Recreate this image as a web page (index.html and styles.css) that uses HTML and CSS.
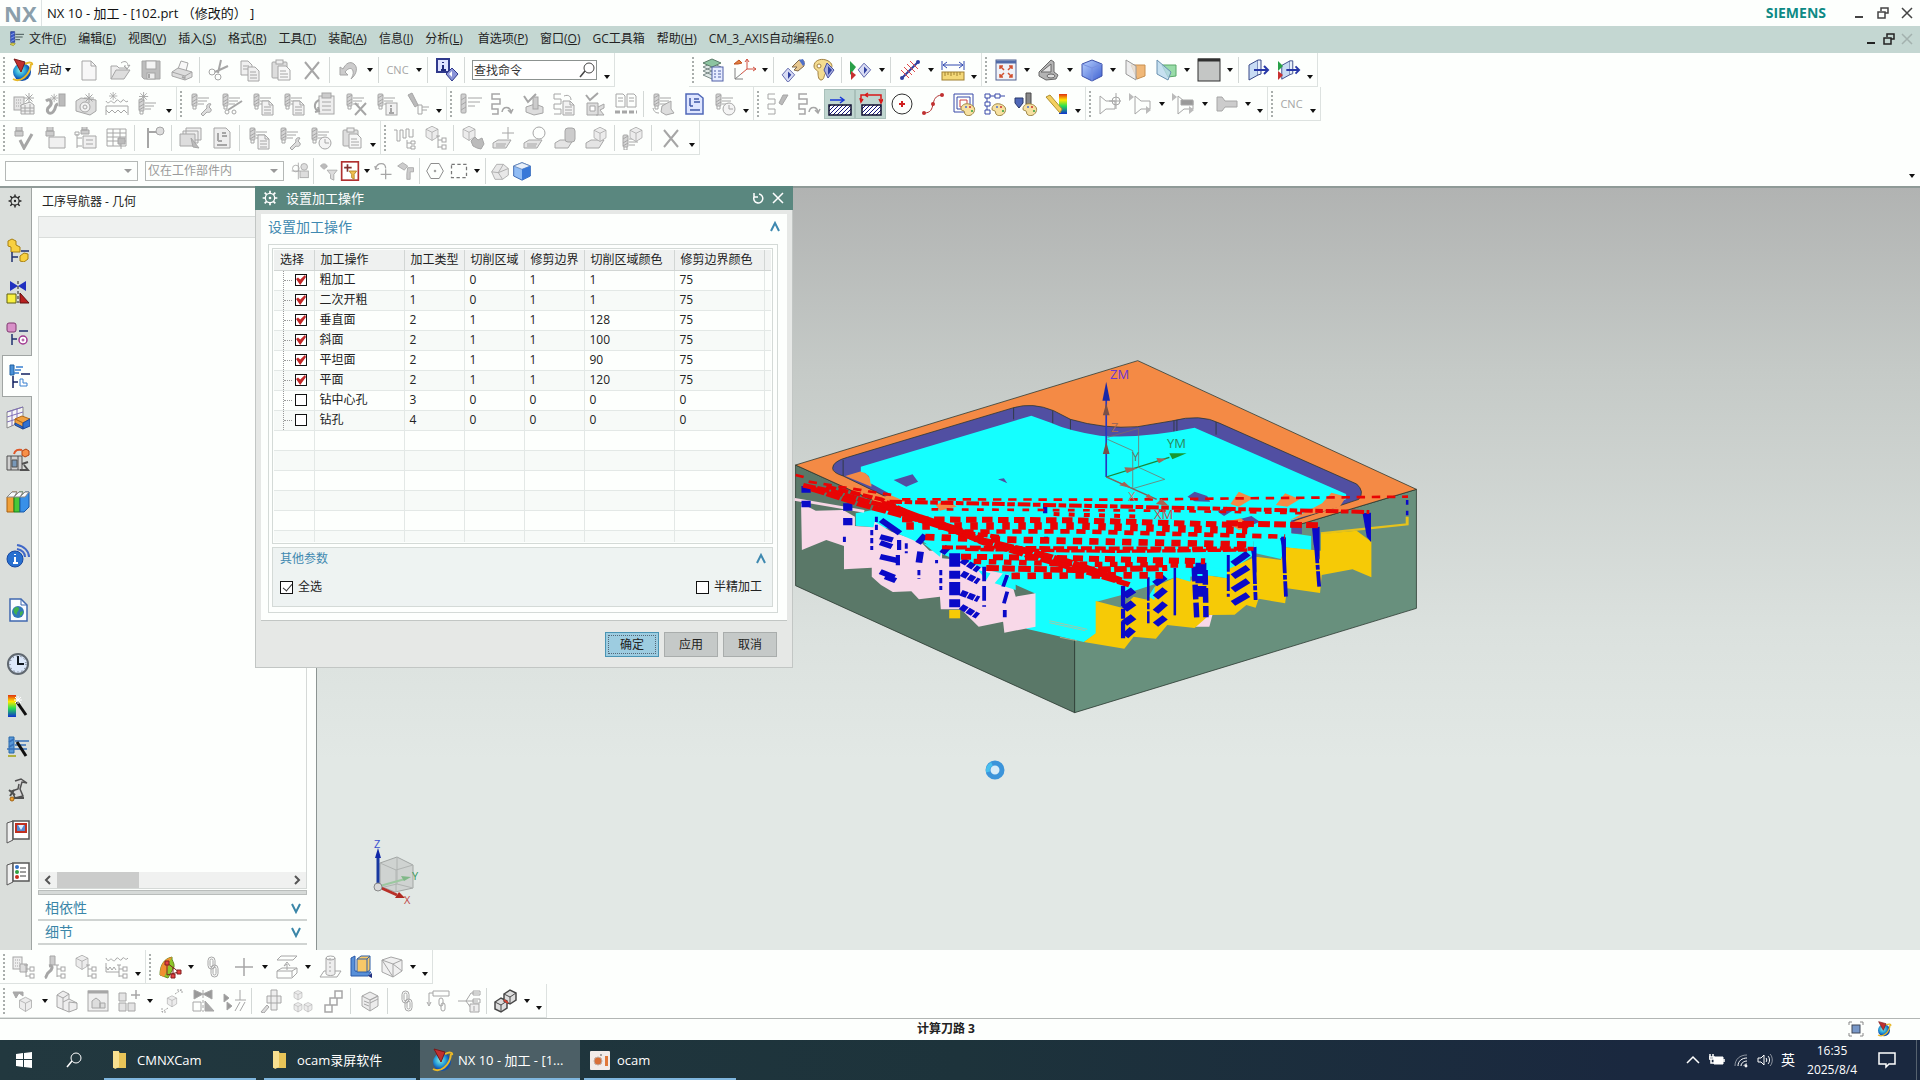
FILE: index.html
```
<!DOCTYPE html>
<html lang="zh-CN">
<head>
    <meta charset="UTF-8">
    <meta name="viewport" content="width=device-width, initial-scale=1.0">
    <title>NX 10 - 加工 - [102.prt （修改的） ]</title>
    <link rel="stylesheet" href="styles.css">
</head>
<body>
    <!-- icon sprite -->
    <svg class="sprite" aria-hidden="true">
        <defs>
            <linearGradient id="gBlue" x1="0" y1="0" x2="1" y2="1"><stop offset="0" stop-color="#b9d2ff"/><stop offset="1" stop-color="#3c5fd0"/></linearGradient>
            <linearGradient id="gRain" x1="0" y1="0" x2="0" y2="1"><stop offset="0" stop-color="#e03010"/><stop offset=".3" stop-color="#ffe800"/><stop offset=".6" stop-color="#28e050"/><stop offset="1" stop-color="#1030d0"/></linearGradient>
            <radialGradient id="gGlobe" cx=".4" cy=".4"><stop offset="0" stop-color="#8ff0e0"/><stop offset=".6" stop-color="#28a0d8"/><stop offset="1" stop-color="#1050b0"/></radialGradient>
            <pattern id="hatch" width="4" height="4" patternUnits="userSpaceOnUse"><path d="M-1 5L5-1" stroke="#15157a" stroke-width="1"/></pattern>
        </defs>

        <!-- small parts shared by the toolbar icons -->
        <symbol id="mill" viewBox="0 0 24 24"><rect x="3" y="2" width="5" height="12" rx="1" fill="#d4d4d4"/><path d="M3 6l5-3M3 10l5-3M3 13l5-3M4 14v3h3v-3M9 6h11M9 9h9M9 12h6"/></symbol>
        <symbol id="star" viewBox="0 0 24 24"><path d="M17 1v10M12 6h10M13.500 2.500l7 7M20.500 2.500l-7 7"/></symbol>
        <symbol id="tree" viewBox="0 0 24 24"><path d="M14 10v12M14 14h4M14 21h4M12 10h4"/><rect x="18" y="12" width="4" height="4" fill="#fff"/><rect x="18" y="19" width="4" height="4" fill="#fff"/></symbol>
        <symbol id="page" viewBox="0 0 24 24"><path d="M11 9h7l4 4v10H11z" fill="#f2f2f2"/><path d="M18 9v4h4M13 15h7M13 18h7M13 21h7"/></symbol>
        <symbol id="palette" viewBox="0 0 24 24"><path d="M9 17c0-4 4-6 8-5s7 4 5 8-6 4-8 3-1-3-2-4-3 0-3-2z" fill="#f6e0a0" stroke="#a08848"/><circle cx="14" cy="15" r="1" fill="#4a70d0" stroke="none"/><circle cx="18" cy="15" r="1" fill="#d03030" stroke="none"/><circle cx="20" cy="19" r="1" fill="#30a040" stroke="none"/></symbol>
        <symbol id="cube" viewBox="0 0 24 24"><path d="M4 7l8-4 8 4v10l-8 5-8-5z" fill="#ececec"/><path d="M4 7l8 4 8-4M12 11v11"/></symbol>
        <symbol id="diamond" viewBox="0 0 24 24"><path d="M12 5l8 8-8 9-7-9z" fill="#d8dcf4" stroke="#4850a0"/><path d="M12 9l4 4-4 5z" fill="#3040a0" stroke="none"/></symbol>

        <!-- standard bar -->
        <symbol id="globe" viewBox="0 0 24 24"><circle cx="12" cy="14" r="9" fill="url(#gGlobe)" stroke="none"/><path d="M3 21c7 4 17-3 18-15M22 7c1-3-3-3-7-1" stroke="#e8b828" stroke-width="2"/><path d="M4 1l11 3-4 10z" fill="#c03030" stroke="#7a1818"/></symbol>
        <symbol id="new" viewBox="0 0 24 24"><path d="M5 3h9l5 5v14H5z" fill="#f7f7f7"/><path d="M14 3v5h5"/></symbol>
        <symbol id="open" viewBox="0 0 24 24"><path d="M3 21V8h6l2 2h8v3" fill="#eee"/><path d="M3 21l5-9h14l-6 9z" fill="#ddd"/><path d="M13 5c4-3 7-1 7 3l2-1-3 4-3-3 2 0"/></symbol>
        <symbol id="save" viewBox="0 0 24 24"><path d="M3 3h18v18H5l-2-2z" fill="#bdbdbd"/><rect x="7" y="3" width="10" height="8" fill="#f4f4f4"/><rect x="8" y="15" width="8" height="6" fill="#eee"/><path d="M10 16v4" stroke-width="2"/></symbol>
        <symbol id="print" viewBox="0 0 24 24"><path d="M8 11l3-8 7 2-2 8" fill="#f8f8f8"/><path d="M2 14l6-4 14 4v5l-7 3-13-4z" fill="#ddd"/><path d="M2 14l13 4 7-4M15 18v4"/><path d="M12 19l3 1" stroke-width="2"/></symbol>
        <symbol id="cut" viewBox="0 0 24 24"><path d="M14 2l-3 13M21 8L8 14" stroke-width="2"/><circle cx="5" cy="14" r="3"/><circle cx="11" cy="19" r="3"/></symbol>
        <symbol id="copy" viewBox="0 0 24 24"><path d="M3 3h7l4 4v10H3z" fill="#f0f0f0"/><path d="M10 9h7l4 4v10H10z" fill="#f0f0f0"/><path d="M5 8h6M5 11h5M12 14h6M12 17h7M12 20h7"/></symbol>
        <symbol id="paste" viewBox="0 0 24 24"><rect x="3" y="4" width="15" height="16" rx="1" fill="#ddd"/><rect x="7" y="2" width="7" height="4" fill="#eee"/><path d="M9 8h8l4 4v10H9z" fill="#f7f7f7"/><path d="M11 13h6M11 16h8M11 19h8"/></symbol>
        <symbol id="del" viewBox="0 0 24 24"><path d="M5 4l14 17M19 4L5 21" stroke-width="2"/></symbol>
        <symbol id="undo" viewBox="0 0 24 24"><path d="M3 9v8h8l-3-3c3-4 7-5 8-1 1 3-1 6-2 8 6-5 7-12 3-15s-8-1-11 5z" fill="#ccc"/></symbol>
        <symbol id="info" viewBox="0 0 24 24"><rect x="2" y="1" width="12" height="13" fill="#dfe3ff" stroke="#303a8c" stroke-width="2"/><path d="M8 4v1M8 7v5M6 12h5" stroke="#202a7c" stroke-width="2"/><path d="M17 10l6 6-6 7-6-7z" fill="#8a94d8" stroke="#303a8c"/><path d="M17 13v6l-3-3z" fill="#fff" stroke="none"/></symbol>
        <symbol id="layers" viewBox="0 0 24 24"><path d="M2 17l9-4 9 4-9 4zM2 13l9-4 9 4-9 4zM2 9l9-4 9 4-9 4z" fill="#dfe8e6" stroke="#7a8a88"/><path d="M2 5l9-4 9 4-9 4z" fill="#8cc4a0" stroke="#5a7a68"/><rect x="11" y="9" width="11" height="14" fill="#e6ecff" stroke="#5060a8"/><path d="M13 13h2M17 13h3M13 16h2M17 16h3M13 19h2M17 19h3" stroke="#5060a8"/></symbol>
        <symbol id="wcs" viewBox="0 0 24 24"><path d="M15 1v10h9M15 11l-6 5M13 4l2-3 2 3M21 9l3 2-3 2" stroke="#d05040"/><path d="M3 10v11h8M3 21l6-5" stroke="#808080"/><path d="M2 6l5-4 3 3-4 1z" fill="#e08040" stroke="#c05020"/></symbol>
        <symbol id="hand" viewBox="0 0 24 24"><use href="#diamond" x="-3" y="6" width="20" height="20"/><path d="M11 9l7-7 5 1v5l-6 5-4-1 3-3z" fill="#e8c890" stroke="#806848"/><path d="M18 2l4-1 2 5-2 2z" fill="#5070c8" stroke="none"/></symbol>
        <symbol id="objpal" viewBox="0 0 24 24"><path d="M2 8c0-5 6-8 12-6s7 6 5 9-5 3-6 5-1 6-4 6-3-6-3-8-4-2-4-6z" fill="#f4dc90" stroke="#a08040"/><path d="M15 5l7 7-6 8-4-8z" fill="#a8b0e0" stroke="#4850a0"/><path d="M16 8l4 4-4 5z" fill="#3040a0" stroke="none"/><circle cx="7" cy="8" r="2" fill="#fff" stroke="#a08040"/></symbol>
        <symbol id="move" viewBox="0 0 24 24"><path d="M1 3v14l6-8z" fill="#28a048" stroke="none"/><path d="M2 13v9l5-5z" fill="#c83030" stroke="none"/><use href="#diamond" x="5" width="20" height="22"/></symbol>
        <symbol id="measline" viewBox="0 0 24 24"><path d="M4 20L20 4" stroke="#3040a0" stroke-width="2"/><path d="M3 12l8 8M6 9l8 8M9 6l8 8M12 3l8 8" stroke="#e04848"/><circle cx="4" cy="20" r="2" fill="#3040a0" stroke="none"/><circle cx="20" cy="4" r="2" fill="#3040a0" stroke="none"/></symbol>
        <symbol id="ruler" viewBox="0 0 24 24"><path d="M1 3v9M23 3v9M2 7h20M6 4L2 7l4 3M18 4l4 3-4 3" stroke="#3048b0"/><rect x="1" y="14" width="22" height="8" fill="#f4d878" stroke="#a08030"/><path d="M4 14v4M7 14v3M10 14v4M13 14v3M16 14v4M19 14v3" stroke="#a08030"/></symbol>
        <symbol id="fit" viewBox="0 0 24 24"><rect x="2" y="2" width="20" height="20" fill="#f0f2f8" stroke="#506090"/><path d="M2 4h20" stroke="#506aa8" stroke-width="3"/><path d="M10 12L6 8M6 11V8h3M14 12l4-4M18 11V8h-3M10 15l-4 4M6 16v3h3M14 15l4 4M18 16v3h-3" stroke="#d05030" stroke-width="1.500"/></symbol>
        <symbol id="orient" viewBox="0 0 24 24"><path d="M2 14L14 2l3 2v10l4 3-2 4-10 1-7-4z" fill="#b4b4b4" stroke="#686868"/><path d="M4 14l10-8v8z" fill="#e4e4e4" stroke="#686868"/><ellipse cx="14" cy="18" rx="4" ry="2" fill="#ddd" stroke="#686868"/></symbol>
        <symbol id="shaded" viewBox="0 0 24 24"><path d="M2 6l10-4 10 4v12l-10 5-10-5z" fill="url(#gBlue)" stroke="#3c50a8"/><path d="M2 6l10 4 10-4M12 10v13" stroke="#7890e0"/></symbol>
        <symbol id="clipo" viewBox="0 0 24 24"><path d="M8 7h14v11l-8 3z" fill="#f0b878" stroke="#c89050"/><path d="M3 2l10 6v14L3 16z" fill="#e8e8e8" stroke="#989898" fill-opacity=".8"/></symbol>
        <symbol id="clipg" viewBox="0 0 24 24"><path d="M8 7h14v11l-8 1z" fill="#98dca8" stroke="#58a868"/><path d="M3 2l14 12-3 8L3 16z" fill="#b8d8ec" stroke="#6890b0" fill-opacity=".8"/></symbol>
        <symbol id="bg" viewBox="0 0 24 24"><rect x="1" y="1" width="22" height="22" fill="#c4c6c5" stroke="#303030"/><path d="M1 2h22" stroke="#303030" stroke-width="3"/></symbol>
        <symbol id="exit" viewBox="0 0 24 24"><path d="M3 7l9-5v15l-9 5z" fill="#c8dcf4" stroke="#384888"/><path d="M12 2h3v14l-3 1" fill="#e8f0fa" stroke="#384888"/><path d="M8 12h13M18 8l4 4-4 4" stroke="#2838a8" stroke-width="2"/></symbol>
        <symbol id="exit2" viewBox="0 0 24 24"><use href="#exit" x="2" width="22" height="24"/><path d="M1 3v10l5-5z" fill="#28a048" stroke="none"/><path d="M1 13v9l5-5z" fill="#c83030" stroke="none"/></symbol>

        <!-- machining bars -->
        <symbol id="m1" viewBox="0 0 24 24"><rect x="2" y="5" width="10" height="13" fill="#e4e4e4"/><path d="M4 8h6M4 11h6M4 14h6" stroke-dasharray="1 1"/><path d="M9 13l9-3 4 3v9H9z" fill="#eee"/><path d="M9 16h13M9 19h13M13 13v9M18 12v10"/><use href="#star"/></symbol>
        <symbol id="m2" viewBox="0 0 24 24"><rect x="16" y="2" width="6" height="12" fill="#bbb"/><path d="M3 9c5-4 7 3 3 6s0 9 4 5 1-7 5-8" stroke-width="3"/><use href="#star" x="-3" y="1" width="20" height="20"/></symbol>
        <symbol id="m3" viewBox="0 0 24 24"><path d="M2 9l5-3 15 2v11l-6 4-14-4z" fill="#ddd"/><circle cx="11" cy="15" r="5" fill="#f2f2f2"/><circle cx="11" cy="15" r="2"/><use href="#star" x="-2"/></symbol>
        <symbol id="m4" viewBox="0 0 24 24"><path d="M1 9c2 4 4 0 5 0s3 4 5 0 4 4 6 0 3 3 6 0M1 23V14h22v9M1 18l3 3 3-3 3 3 3-3 3 3 3-3 3 3"/><use href="#star" x="-6" y="-1" width="20" height="20"/></symbol>
        <symbol id="m5" viewBox="0 0 24 24"><use href="#mill" y="5"/><use href="#star" x="-8" y="-1" width="22" height="22"/></symbol>
        <symbol id="mw" viewBox="0 0 24 24"><use href="#mill"/><path d="M12 22l6-6c-1-3 1-5 4-4l-2 3 2 2c1 3-2 4-4 3l-4 4z" fill="#ddd"/></symbol>
        <symbol id="mc" viewBox="0 0 24 24"><use href="#mill"/><path d="M22 9L8 18" stroke-width="2"/><circle cx="7" cy="20" r="2"/><circle cx="14" cy="20" r="2"/></symbol>
        <symbol id="mp" viewBox="0 0 24 24"><use href="#mill"/><use href="#page"/></symbol>
        <symbol id="mx" viewBox="0 0 24 24"><use href="#mill"/><path d="M11 11l11 12M22 11L11 23" stroke-width="2"/></symbol>
        <symbol id="mi" viewBox="0 0 24 24"><use href="#mill"/><rect x="11" y="11" width="11" height="12" fill="#f2f2f2"/><path d="M16 13v2M16 16v5M14 21h5" stroke-width="2"/></symbol>
        <symbol id="mf" viewBox="0 0 24 24"><path d="M2 3l4-2 6 12-3 2z" fill="#bbb"/><path d="M12 13h4v9h-4zM16 15h7M16 18h5"/></symbol>
        <symbol id="clip" viewBox="0 0 24 24"><rect x="6" y="4" width="15" height="18" fill="#eee"/><rect x="9" y="1" width="9" height="5" fill="#ccc"/><path d="M9 10h9M9 14h9M9 18h9"/><path d="M6 8c-6 3-5 10 0 11l-1-4M6 19l-4 1" stroke-width="2"/></symbol>
        <symbol id="gen" viewBox="0 0 24 24"><rect x="2" y="2" width="5" height="19" rx="1" fill="#d0d0d0"/><path d="M2 8l5-3M2 13l5-3M2 18l5-3M9 6h14M9 10h12M9 14h7"/></symbol>
        <symbol id="path" viewBox="0 0 24 24"><path d="M10 2H2v5h8v5H2v5h6v5H2" stroke-width="1.500"/><path d="M12 20c1-6 8-6 9 0M18 18l3 3 2-4" stroke-width="1.500"/></symbol>
        <symbol id="verify" viewBox="0 0 24 24"><path d="M3 4l4 6 8-8" stroke-width="2"/><path d="M5 15l9-3 8 3v6l-9 2-8-3z" fill="#ddd"/><rect x="12" y="5" width="5" height="12" fill="#ccc"/></symbol>
        <symbol id="pathp" viewBox="0 0 24 24"><path d="M9 2H2v5h7v5H2v5h7v5H2"/><use href="#page"/><path d="M12 4c5-2 7 1 7 4"/></symbol>
        <symbol id="mach" viewBox="0 0 24 24"><path d="M3 3l4 5 8-7" stroke-width="2"/><path d="M4 11h11v12H4zM15 15l6-3v4l-4 2 4 5h-8" fill="#ddd"/><path d="M7 14h5v5H7z" fill="#fff"/></symbol>
        <symbol id="docs" viewBox="0 0 24 24"><path d="M2 2h7l2 2v11H2zM13 2h7l2 2v11h-9zM4 6h5M4 9h5M15 6h5M15 9h5"/><path d="M1 20h22" stroke-width="3" stroke-dasharray="5 2"/></symbol>
        <symbol id="mhand" viewBox="0 0 24 24"><use href="#mill"/><path d="M11 14l9-5v8l3 4-8 2-5-3z" fill="#ddd"/><path d="M2 16c1 4 3 5 6 5"/></symbol>
        <symbol id="shop" viewBox="0 0 24 24"><path d="M4 2h12l5 4v16H4z" fill="#dfe6ff" stroke="#5068b8" stroke-width="1.500"/><path d="M8 6v8M8 14h3M12 7h5M12 10h6M8 18h10" stroke="#4058a8" stroke-width="1.500"/></symbol>
        <symbol id="mclock" viewBox="0 0 24 24"><use href="#mill"/><circle cx="16" cy="17" r="6" fill="#f4f4f4"/><path d="M16 13v4h4"/></symbol>
        <symbol id="pathm" viewBox="0 0 24 24"><path d="M9 2H2v5h7v5H2v5h7v5H2"/><path d="M22 3l-6 10-3-2 4-8z" fill="#bbb"/></symbol>
        <symbol id="hat1" viewBox="0 0 24 24"><path d="M2 8h13M12 5l4 3-4 3" stroke="#1838d8" stroke-width="1.500"/><rect x="1" y="13" width="22" height="10" fill="#fff" stroke="none"/><rect x="1" y="13" width="22" height="10" fill="url(#hatch)" stroke="#101030" stroke-width="1.500"/></symbol>
        <symbol id="hat2" viewBox="0 0 24 24"><path d="M2 9V3h20v6M9 1L6 3l3 2M1 6l1 4 2-3M20 7l2 4 2-4" stroke="#d81818" stroke-width="1.500"/><rect x="3" y="13" width="19" height="10" fill="#fff" stroke="none"/><rect x="3" y="13" width="19" height="10" fill="url(#hatch)" stroke="#101030" stroke-width="1.500"/></symbol>
        <symbol id="circ" viewBox="0 0 24 24"><circle cx="12" cy="12" r="10" stroke="#303030"/><path d="M12 9v6M9 12h6" stroke="#d02020" stroke-width="2"/></symbol>
        <symbol id="curve" viewBox="0 0 24 24"><path d="M3 21c14 0 4-17 18-18" stroke="#b03030"/><circle cx="3" cy="21" r="2" fill="#c03030" stroke="none"/><circle cx="12" cy="12" r="2" fill="#c03030" stroke="none"/><circle cx="21" cy="3" r="2" fill="#c03030" stroke="none"/></symbol>
        <symbol id="bpal" viewBox="0 0 24 24"><path d="M2 2h19v18H2zM5 5h13v12H5z" stroke="#3848a8"/><path d="M8 15V8h7v7z" stroke="#d04040"/><use href="#palette"/></symbol>
        <symbol id="tpal" viewBox="0 0 24 24"><path d="M2 2h5v4H2zM2 10h5v4H2zM2 18h5v4H2zM12 2h5v4h-5zM7 4h5M4 6v4M4 14v4M17 4h5" stroke="#3848a8"/><use href="#palette"/></symbol>
        <symbol id="mpal" viewBox="0 0 24 24"><path d="M12 1h5v11h-5z" fill="#888" stroke="#484848"/><path d="M1 6h8v5l-4 5-4-5z" fill="#5068b8" stroke="#283868"/><use href="#palette"/></symbol>
        <symbol id="rain" viewBox="0 0 24 24"><rect x="14" y="2" width="8" height="20" fill="url(#gRain)" stroke="none"/><path d="M1 5l4-2 12 14-2 4z" fill="#f4d060" stroke="#b09030"/></symbol>
        <symbol id="funnel" viewBox="0 0 24 24"><path d="M2 4l6 5h9v8H8l-6 5z"/></symbol>
        <symbol id="fu1" viewBox="0 0 24 24"><use href="#funnel"/><circle cx="18" cy="9" r="4"/><path d="M18 1v16M11 9h12"/></symbol>
        <symbol id="fu2" viewBox="0 0 24 24"><use href="#funnel" x="4"/><path d="M0 1v8l5-4zM17 14v8l5-4z" fill="#bbb" stroke="none"/></symbol>
        <symbol id="fu3" viewBox="0 0 24 24"><use href="#funnel" x="4"/><path d="M9 8h12v5H9z" fill="#999"/><path d="M0 1v8l5-4zM17 14v8l5-4z" fill="#bbb" stroke="none"/></symbol>
        <symbol id="fu4" viewBox="0 0 24 24"><path d="M2 5h5l3 4h12v6H10l-3 4H2z" fill="#ccc"/></symbol>

        <symbol id="pok" viewBox="0 0 24 24"><path d="M4 1v4h6V1M3 5h8v5H3z" fill="#ccc"/><path d="M8 14l4 8 8-14" stroke-width="3"/></symbol>
        <symbol id="pbox" viewBox="0 0 24 24"><path d="M4 1v4h6V1M3 5h8v5H3z" fill="#ccc"/><path d="M6 11h16v11H6z" fill="#f0f0f0"/></symbol>
        <symbol id="ptree" viewBox="0 0 24 24"><path d="M8 1v3h5V1M7 4h8v4H7z" fill="#ccc"/><path d="M3 8v14M3 12h5M3 20h5M1 6h4v3H1z"/><path d="M9 10h13v12H9zM12 14h7M12 18h7" fill="#f0f0f0"/></symbol>
        <symbol id="ptab" viewBox="0 0 24 24"><path d="M2 3h19v17H2zM2 7h19M2 11h19M2 15h19M8 3v17M15 3v17"/><path d="M13 12h7v6h-7zM16 18v5" fill="#bbb"/></symbol>
        <symbol id="flag" viewBox="0 0 24 24"><path d="M6 2v20" stroke-width="2"/><path d="M7 6h9" stroke-width="2"/><circle cx="18" cy="5" r="4" fill="#ddd"/></symbol>
        <symbol id="wins" viewBox="0 0 24 24"><path d="M7 2h15v12H7zM4 5h15v12H4z" fill="#eee"/><path d="M1 8h15v12H1z" fill="#ddd"/><path d="M12 12l8 10-6-1z" fill="#bbb"/></symbol>
        <symbol id="mdoc" viewBox="0 0 24 24"><path d="M4 2h12l4 4v16H4z" fill="#eee"/><path d="M8 7v8M8 15h4M12 7h4M12 10h5M7 19h10" stroke-width="2"/></symbol>
        <symbol id="wave" viewBox="0 0 24 24"><path d="M1 4h3v11h3V4h3v8h3V3h3v8h4V3M14 14v8M14 17h4M14 22h4M18 15h4v3h-4zM18 20h4v3h-4z"/></symbol>
        <symbol id="ctree" viewBox="0 0 24 24"><use href="#cube" x="-1" y="-2" width="18" height="18"/><use href="#tree"/></symbol>
        <symbol id="cbin" viewBox="0 0 24 24"><use href="#cube" x="-1" y="-2" width="18" height="18"/><path d="M10 15l4-4 3 3 4-2 2 6-3 5-4-1-4-2z" fill="#bbb"/></symbol>
        <symbol id="plus1" viewBox="0 0 24 24"><path d="M16 1v12M10 7h12"/><path d="M1 17l5-3h13l-5 8H1z" fill="#e4e4e4"/><path d="M4 18h10M4 20h9"/></symbol>
        <symbol id="loop1" viewBox="0 0 24 24"><circle cx="16" cy="7" r="6"/><path d="M1 17l5-3h13l-5 8H1z" fill="#e4e4e4"/><path d="M4 18h10M4 20h9"/></symbol>
        <symbol id="cyl1" viewBox="0 0 24 24"><path d="M1 17l5-3h13l-5 8H1z" fill="#e4e4e4"/><rect x="11" y="2" width="10" height="14" rx="3" fill="#ccc"/></symbol>
        <symbol id="cub1" viewBox="0 0 24 24"><path d="M1 17l5-3h13l-5 8H1z" fill="#e4e4e4"/><use href="#cube" x="6" y="-1" width="18" height="18"/></symbol>
        <symbol id="cmill" viewBox="0 0 24 24"><use href="#mill" y="7" x="-2"/><use href="#cube" x="5" y="-1" width="18" height="18"/></symbol>

        <!-- selection bar -->
        <symbol id="selstar" viewBox="0 0 24 24"><path d="M10 2v20M2 12h10"/><circle cx="7" cy="9" r="4"/><circle cx="17" cy="7" r="4" fill="#ddd"/><rect x="12" y="12" width="10" height="8" fill="#ddd"/></symbol>
        <symbol id="lock" viewBox="0 0 24 24"><path d="M3 6c2-4 8-3 8 1l-4 3z" fill="#bbb"/><path d="M11 11h12l-4 5v7l-4-2v-5z" fill="#ddd"/></symbol>
        <symbol id="selflt" viewBox="0 0 24 24"><rect x="2" y="1" width="20" height="22" fill="#fff" stroke="#b03030" stroke-width="2"/><path d="M9 4v9M5 8h9" stroke="#803030" stroke-width="2"/><path d="M11 12h9l-3 4v6l-3-2v-4z" fill="#f0c050" stroke="#b08020"/></symbol>
        <symbol id="snap" viewBox="0 0 24 24"><path d="M2 9c2-8 12-8 12 0M1 6l1 4 4-1M14 10v12M8 16h13" stroke-width="1.500"/></symbol>
        <symbol id="snap2" viewBox="0 0 24 24"><path d="M2 6l6-4 6 4-4 5zM14 8h7v5h-4v9h-4v-7z" fill="#ccc"/></symbol>
        <symbol id="hex" viewBox="0 0 24 24"><path d="M7 3h10l5 9-5 9H7l-5-9z"/><circle cx="12" cy="12" r="1"/></symbol>
        <symbol id="dash" viewBox="0 0 24 24"><rect x="3" y="4" width="18" height="16" stroke-dasharray="4 3" stroke-width="1.500"/></symbol>
        <symbol id="prism" viewBox="0 0 24 24"><path d="M2 13l6-9h8l6 5v8l-7 5H6z" fill="#e8e8e8"/><path d="M2 13l8 1 6-10M10 14l5 8M10 14l12-5"/></symbol>
        <symbol id="face" viewBox="0 0 24 24"><path d="M2 6l10-4 10 4v12l-10 5-10-5z" fill="#90bcf4" stroke="#2858a8"/><path d="M2 6l10-4 10 4-10 4z" fill="#e8f0fa" stroke="#6888b8"/><path d="M12 10l10-4v12l-10 5z" fill="#3878d8" stroke="none"/></symbol>

        <!-- bottom bars -->
        <symbol id="b1" viewBox="0 0 24 24"><rect x="1" y="2" width="9" height="12" fill="#eee"/><path d="M3 5h5M3 8h5M3 11h5" stroke-dasharray="1 1"/><path d="M8 9h7v8H8z" fill="#ddd"/><use href="#tree"/></symbol>
        <symbol id="b2" viewBox="0 0 24 24"><path d="M7 1h5v9H7z" fill="#ccc"/><path d="M6 11c5-1 3 4 0 6s-2 5-4 6" stroke-width="3"/><use href="#tree"/></symbol>
        <symbol id="b4" viewBox="0 0 24 24"><path d="M1 3c2 5 4 1 5 1s3 4 5 0 4 4 6 0 3 3 6-1M1 8v9h13M1 12l2 3 2-3 2 3 2-3 2 3"/><use href="#tree"/></symbol>
        <symbol id="rsurf" viewBox="0 0 24 24"><path d="M2 20c0-9 3-16 12-18-1 3 3 6 2 10l-6 11z" fill="#8cc828" stroke="#688820"/><path d="M2 20c0-9 3-16 12-18-4 6-3 11-8 20z" fill="#f09030" stroke="none"/><path d="M9 8l12 9M9 8v12l12-3M15 12v9" stroke="#802020"/><path d="M7 6h4v4H7zM19 15h4v4h-4zM13 19h4v4h-4z" fill="#e84040" stroke="#802020"/></symbol>
        <symbol id="chain" viewBox="0 0 24 24"><rect x="7" y="2" width="7" height="12" rx="3.500"/><rect x="10" y="10" width="7" height="12" rx="3.500"/><rect x="9" y="4" width="3" height="8" rx="1.500"/><rect x="12" y="12" width="3" height="8" rx="1.500"/></symbol>
        <symbol id="plus" viewBox="0 0 24 24"><path d="M12 3v18M3 12h18" stroke-width="1.500"/></symbol>
        <symbol id="lift" viewBox="0 0 24 24"><path d="M6 1h16l-4 4H2zM2 16l5-3h15v5l-5 5H2zM2 16h15v6M17 16l5-3M12 15V9l-3 2 3-4 3 4"/></symbol>
        <symbol id="cyl" viewBox="0 0 24 24"><path d="M2 22l4-6h17l-4 6z"/><path d="M8 3v16c1 2 8 2 9 0V3" fill="#eee"/><ellipse cx="12.500" cy="3" rx="4.500" ry="2"/><path d="M12 3v16" stroke-dasharray="2 2"/></symbol>
        <symbol id="sheet" viewBox="0 0 24 24"><path d="M2 3l4-2v15l16 1-3 4H2z" fill="#5890d8" stroke="#2858a8"/><path d="M8 4l4-3h9v14l-3 2H8z" fill="#f8c868" stroke="#3060a8"/><path d="M8 4h10v13M18 4l3-3" stroke="#3060a8"/><path d="M23 18v5l-4-2z" fill="#203080" stroke="none"/></symbol>
        <symbol id="wire" viewBox="0 0 24 24"><path d="M2 5l9-3 11 3v11l-9 6-11-5z" fill="#f0f0f0"/><path d="M2 5l11 4 9-4M13 9v13M2 5l11 17M13 9l9 7"/></symbol>
        <symbol id="c1" viewBox="0 0 24 24"><path d="M1 3h10v4L7 4 4 9z" fill="#aaa"/><use href="#cube" x="4" y="6" width="19" height="18"/></symbol>
        <symbol id="c2" viewBox="0 0 24 24"><path d="M2 6l6-4 6 3v5l8 4v6l-8 3-12-5z" fill="#eee"/><path d="M2 6l6 3 6-4M8 9v12M14 10l-6 3M14 13l8 1M14 13v10"/></symbol>
        <symbol id="c3" viewBox="0 0 24 24"><rect x="2" y="2" width="20" height="20" fill="#eee"/><path d="M2 3h20" stroke-width="3"/><path d="M6 12l4-3 4 3v7H6zM14 14h5v5h-5z" fill="#ddd"/></symbol>
        <symbol id="c4" viewBox="0 0 24 24"><path d="M2 4h7v8H2zM2 14h7v8H2zM11 14h7v8h-7z" fill="#e4e4e4"/><path d="M19 1v9M14 6h9" stroke-width="1.500"/></symbol>
        <symbol id="c5" viewBox="0 0 24 24"><use href="#cube" x="5" y="5" width="14" height="14"/><path d="M15 5l6-4M17 1h5v4M8 19l-6 4M2 19v4h5" stroke-dasharray="2 1"/></symbol>
        <symbol id="c6" viewBox="0 0 24 24"><path d="M3 1v9l9-5zM21 1v9l-9-5z" fill="#999"/><path d="M12 1v22" stroke-dasharray="3 2"/><path d="M2 13h8v9H2z"/><path d="M14 12v10h9z" fill="#aaa"/></symbol>
        <symbol id="c7" viewBox="0 0 24 24"><path d="M2 5v8l5-4zM5 13v8l5-4z" fill="#999"/><path d="M13 11h11M18 1v10M13 22l5-9M18 22l5-9"/></symbol>
        <symbol id="c8" viewBox="0 0 24 24"><path d="M8 7h14v7H8zM12 1h6v20h-6z" fill="#eee"/><path d="M2 23l6-7 2 2-5 6z" fill="#ddd"/></symbol>
        <symbol id="c9" viewBox="0 0 24 24"><use href="#cube" x="2" y="0" width="12" height="12"/><use href="#cube" x="2" y="12" width="12" height="12"/><use href="#cube" x="12" y="12" width="12" height="12"/></symbol>
        <symbol id="c10" viewBox="0 0 24 24"><path d="M14 2h7v7h-7zM9 9h7v7H9zM4 16h7v7H4z" stroke-width="1.500"/></symbol>
        <symbol id="c11" viewBox="0 0 24 24"><use href="#cube"/><path d="M6 12l5 2M6 15l5 2M12 11l8-4M12 14l8-4"/></symbol>
        <symbol id="c12" viewBox="0 0 24 24"><path d="M3 15V4h4M7 2h16v5H7zM1 13l2 4 2-4"/><rect x="13" y="9" width="4" height="8" rx="2"/><rect x="15" y="14" width="4" height="8" rx="2"/></symbol>
        <symbol id="c13" viewBox="0 0 24 24"><path d="M1 12h8M9 12l5-8h8M9 12h12M9 12l5 7M16 2h7v4h-7zM16 10h7v4h-7z"/><path d="M13 15h9v8h-9zM17 17v5" fill="#eee"/></symbol>
        <symbol id="c14" viewBox="0 0 24 24"><path d="M10 5l6-4 6 3v7l-6 4-6-3zM1 13l6-4 6 3v7l-6 4-6-3z" fill="#ddd" stroke="#484848" stroke-width="1.500"/><path d="M10 5l6 3 6-4M16 8v7M1 13l6 3 6-4M7 16v7" stroke="#484848"/><path d="M10 11l4 3" stroke="#d04030" stroke-width="2"/></symbol>

        <!-- resource bar -->
        <symbol id="gear" viewBox="0 0 24 24"><circle cx="12" cy="12" r="7" stroke-width="2"/><circle cx="12" cy="12" r="2" fill="currentColor" stroke="none"/><path d="M12 1v4M12 19v4M1 12h4M19 12h4M4 4l3 3M17 17l3 3M20 4l-3 3M7 17l-3 3" stroke-width="2.500"/></symbol>
        <symbol id="r1" viewBox="0 0 24 24"><path d="M2 3l4-2 4 2v4l4 2v5H5V9L2 8z" fill="#f8d040" stroke="#a88010"/><path d="M6 14v10M6 19h6M15 13h8" stroke="#203070" stroke-width="1.500"/><path d="M14 18l4-3 4 1v5l-4 3-4-1z" fill="#f8d040" stroke="#a88010"/></symbol>
        <symbol id="r2" viewBox="0 0 24 24"><path d="M4 1v10l8-5zM20 1v10l-8-5z" fill="#2030c0" stroke="none"/><path d="M12 1v22" stroke="#202020" stroke-dasharray="3 2"/><path d="M1 14h9v9H1z" fill="#f8f040" stroke="#606010"/><path d="M14 13v10h9z" fill="#b82020" stroke="#601010"/></symbol>
        <symbol id="r3" viewBox="0 0 24 24"><rect x="1" y="1" width="9" height="9" rx="2" fill="#d890c8" stroke="#803870"/><path d="M6 12v11M6 17h5M13 9h9" stroke="#203070" stroke-width="1.500"/><circle cx="17" cy="18" r="4" fill="#fff" stroke="#a03890" stroke-width="1.500"/><circle cx="17" cy="18" r="1" stroke="#a03890"/></symbol>
        <symbol id="r4" viewBox="0 0 24 24"><path d="M3 1h4v10H3z" fill="#4890d8" stroke="#2060a0"/><path d="M9 3h7M8 6h6M7 9h5" stroke="#3880d0" stroke-width="1.500"/><path d="M6 12v12M6 18h5M14 10h9" stroke="#102060" stroke-width="1.500"/><path d="M13 15h3v4h4v3h-7z" stroke="#3880d0" fill="#fff"/></symbol>
        <symbol id="r5" viewBox="0 0 24 24"><path d="M1 6l16-5v14L1 22z" fill="#f6f6f6" stroke="#888"/><path d="M1 6l16-5M1 11l16-5M1 16l16-5M6 5v15M11 3v15" stroke="#8070b8"/><path d="M9 13l7-3 8 3-7 4z" fill="#f0a040" stroke="#b06818"/><path d="M9 13l8 4v6l-8-4z" fill="#f0a040" stroke="#b06818"/><path d="M17 17l7-4v7l-7 3zM9 17l8 4v2l-8-4z" fill="#3070d0" stroke="#1848a0"/></symbol>
        <symbol id="r6" viewBox="0 0 24 24"><path d="M1 8h15v14H1z" fill="#d0d0d0" stroke="#505050"/><path d="M5 8v14M12 8v14M6 12h5v7H6z" fill="#7898b8" stroke="#505050"/><path d="M16 16l6-2M18 17l4 5h-8" stroke="#505050" stroke-width="2"/><path d="M8 6c1-4 4-5 8-4" stroke="#e05828" stroke-width="2"/><path d="M16 3l4-2 3 2v4l-4 2-3-2z" fill="#f89048" stroke="#b04010"/></symbol>
        <symbol id="r7" viewBox="0 0 24 24"><path d="M1 7l5-5h5L8 7v15H1z" fill="#f0a038" stroke="#a86010"/><path d="M8 7l5-5h4l-3 5v15H8z" fill="#48c838" stroke="#188018"/><path d="M14 7l5-5h4v15l-5 5h-4z" fill="#3890e8" stroke="#1858a8"/><path d="M1 7l5-5h5L8 7zM8 7l5-5h4l-3 5zM14 7l5-5h4l-4 5z" fill="#f8fafc" stroke="#888"/></symbol>
        <symbol id="r8" viewBox="0 0 24 24"><circle cx="9" cy="15" r="8" fill="#2870d0" stroke="#1848a0"/><path d="M9 10v1M9 13v6M7 19h5" stroke="#fff" stroke-width="2"/><path d="M11 1c7 1 12 6 12 12M11 5c5 1 8 4 8 8" stroke="#4068c8" stroke-width="2"/></symbol>
        <symbol id="r9" viewBox="0 0 24 24"><path d="M4 1h11l6 6v16H4z" fill="#fafcff" stroke="#4068b0" stroke-width="1.500"/><path d="M15 1v6h6" stroke="#4068b0"/><circle cx="12" cy="14" r="6" fill="#3078b8" stroke="none"/><path d="M8 11c2-3 5-2 5 0s-3 3-2 6c-3-1-4-4-3-6zM14 14l3-1c0 3-1 4-3 5z" fill="#40b050" stroke="none"/></symbol>
        <symbol id="r10" viewBox="0 0 24 24"><circle cx="12" cy="12" r="10" fill="#dce8fa" stroke="#606870" stroke-width="2"/><path d="M12 4v8h6" stroke="#101820" stroke-width="2"/><circle cx="12" cy="12" r="8" stroke="#485060" stroke-dasharray="1 3"/></symbol>
        <symbol id="r11" viewBox="0 0 24 24"><rect x="2" y="1" width="8" height="22" fill="url(#gRain)" stroke="none"/><path d="M11 8l9 13" stroke="#101010" stroke-width="3"/><path d="M12 2v8M8 6h8M9 3l6 6M15 3l-6 6" stroke="#fff"/></symbol>
        <symbol id="r12" viewBox="0 0 24 24"><path d="M3 1h5v16H3z" fill="#5898d8" stroke="#2868a8"/><path d="M3 6l5-3M3 11l5-3M9 5h14M9 9h11M1 13h20" stroke="#3870b8" stroke-width="1.500"/><path d="M2 20h8" stroke="#b0b040" stroke-width="2"/><path d="M11 6l9 14" stroke="#101010" stroke-width="3"/></symbol>
        <symbol id="r13" viewBox="0 0 24 24"><path d="M9 3l6-2 6 4-5-1-2 7 3 7-8 2-3-7 6-2 1-5" fill="#d8d8d8" stroke="#505050" stroke-width="1.500"/><path d="M3 12l6 5M8 12l-4 6M8 20h10" stroke="#505050" stroke-width="2"/><circle cx="6" cy="21" r="2" fill="#f0a030" stroke="#a06010"/></symbol>
        <symbol id="r14" viewBox="0 0 24 24"><path d="M1 3l6-2v19l-6 3z" fill="#f0f0f0" stroke="#585858"/><path d="M7 1h16v18H7z" fill="#fff" stroke="#585858" stroke-width="1.500"/><path d="M10 4h10v8H10z" fill="#5888d0" stroke="#c03020" stroke-width="2"/><path d="M12 5h6l-3 5z" fill="#e0f0ff" stroke="none"/></symbol>
        <symbol id="r15" viewBox="0 0 24 24"><path d="M1 3l6-2v19l-6 3z" fill="#f0f0f0" stroke="#585858"/><path d="M7 1h16v18H7z" fill="#fff" stroke="#585858" stroke-width="1.500"/><path d="M14 6h6M14 10h6M14 14h6" stroke="#404040"/><circle cx="11" cy="5" r="2" fill="#3070c8" stroke="none"/><circle cx="11" cy="10" r="2" fill="#30a040" stroke="none"/><circle cx="11" cy="15" r="2" fill="#c83020" stroke="none"/></symbol>
        <symbol id="app" viewBox="0 0 24 24"><path d="M4 1h6v16H4z" fill="#3858c8" stroke="#203080"/><path d="M4 6l6-3M4 11l6-3M4 16l6-3" stroke="#a8b8f0"/><path d="M11 5h13M11 9h11M11 13h7" stroke="#485858" stroke-width="1.500"/><path d="M3 20l3-2 5 1-3 3z" fill="#d8d050" stroke="#989020"/></symbol>

        <!-- window controls, status and tray -->
        <symbol id="w-min" viewBox="0 0 12 12"><path d="M2 10h8" stroke-width="2"/></symbol>
        <symbol id="w-res" viewBox="0 0 12 12"><path d="M4 4V1h7v5H8" stroke-width="1.500"/><path d="M1 5h7v6H1z" stroke-width="1.500"/></symbol>
        <symbol id="w-cls" viewBox="0 0 12 12"><path d="M1 1l10 10M11 1L1 11" stroke-width="1.500"/></symbol>
        <symbol id="reset" viewBox="0 0 12 12"><path d="M7 2a4.500 4.500 0 1 1-5 3M2 1v4h4" stroke-width="1.500"/></symbol>
        <symbol id="up" viewBox="0 0 12 12"><path d="M2 10l4-8 4 8" stroke-width="2"/></symbol>
        <symbol id="down" viewBox="0 0 12 12"><path d="M2 2l4 8 4-8" stroke-width="2"/></symbol>
        <symbol id="left" viewBox="0 0 12 12"><path d="M8 2L4 6l4 4" stroke-width="2"/></symbol>
        <symbol id="right" viewBox="0 0 12 12"><path d="M4 2l4 4-4 4" stroke-width="2"/></symbol>
        <symbol id="mag" viewBox="0 0 16 16"><circle cx="10" cy="6" r="5"/><path d="M6 9l-5 6" stroke-width="1.500"/></symbol>
        <symbol id="frame" viewBox="0 0 16 16"><path d="M1 4V1h3M12 1h3v3M15 12v3h-3M4 15H1v-3" stroke="#888"/><rect x="4" y="4" width="8" height="8" fill="#7898c8" stroke="#404858"/></symbol>
        <symbol id="t-win" viewBox="0 0 16 16"><path d="M0 2l7-1v6H0zM8 1l8-1v7H8zM0 8h7v7l-7-1zM8 8h8v8l-8-1z" fill="#fff" stroke="none"/></symbol>
        <symbol id="t-dir" viewBox="0 0 20 20"><path d="M3 1h5l2 2h6v15H3z" fill="#e8c458" stroke="none"/><path d="M3 1h6v16l-4 2-2-2z" fill="#f8e090" stroke="none"/></symbol>
        <symbol id="t-cam" viewBox="0 0 20 20"><rect width="20" height="19" rx="1" y="1" fill="#f2ece8" stroke="none"/><circle cx="8" cy="11" r="4" fill="#d87038" stroke="#c0b0a8"/><rect x="15" y="6" width="3" height="10" fill="#e07838" stroke="none"/><circle cx="11" cy="5" r="1" fill="#888" stroke="none"/></symbol>
        <symbol id="t-up" viewBox="0 0 16 16"><path d="M2 11l6-6 6 6" stroke-width="1.500"/></symbol>
        <symbol id="t-bat" viewBox="0 0 16 16"><path d="M5 5h9v7H5z" fill="#fff"/><path d="M15 7v3M1 2v3M4 2v3M0 5h5v2H0zM2 7v4h3" stroke-width="1.500"/></symbol>
        <symbol id="t-net" viewBox="0 0 16 16"><path d="M2 14C2 7 7 3 14 3" opacity=".5"/><path d="M5 14c0-5 4-8 9-8M8 14c0-3 3-5 6-5M11 14c0-1 1-2 3-2"/><circle cx="13" cy="14" r="1" fill="#fff"/></symbol>
        <symbol id="t-vol" viewBox="0 0 16 16"><path d="M1 6h3l3-3v10l-3-3H1z"/><path d="M9 6c1 1 1 3 0 4M11 4c2 2 2 6 0 8"/><path d="M13 2c3 3 3 9 0 12" opacity=".5"/></symbol>
        <symbol id="t-msg" viewBox="0 0 18 18"><path d="M1 2h16v11h-6l-3 3v-3H1z" stroke-width="1.500"/></symbol>
    </svg>

    <header class="titlebar">
        <span class="nx-logo">NX</span>
        <h1>NX 10 - 加工 - [102.prt （修改的） ]</h1>
        <span class="siemens">SIEMENS</span>
        <div class="win-buttons">
            <button aria-label="最小化"><svg class="ic12"><use href="#w-min"/></svg></button>
            <button aria-label="还原"><svg class="ic12"><use href="#w-res"/></svg></button>
            <button aria-label="关闭"><svg class="ic12"><use href="#w-cls"/></svg></button>
        </div>
    </header>

    <nav class="menubar">
        <svg class="ic16 menu-icon"><use href="#app"/></svg>
        <a href="#">文件(<u>F</u>)</a>
        <a href="#">编辑(<u>E</u>)</a>
        <a href="#">视图(<u>V</u>)</a>
        <a href="#">插入(<u>S</u>)</a>
        <a href="#">格式(<u>R</u>)</a>
        <a href="#">工具(<u>T</u>)</a>
        <a href="#">装配(<u>A</u>)</a>
        <a href="#">信息(<u>I</u>)</a>
        <a href="#" class="wide">分析(<u>L</u>)</a>
        <a href="#">首选项(<u>P</u>)</a>
        <a href="#">窗口(<u>O</u>)</a>
        <a href="#">GC工具箱</a>
        <a href="#">帮助(<u>H</u>)</a>
        <a href="#">CM_3_AXIS自动编程6.0</a>
        <div class="doc-buttons">
            <button aria-label="最小化文档"><svg class="ic12"><use href="#w-min"/></svg></button>
            <button aria-label="还原文档"><svg class="ic12"><use href="#w-res"/></svg></button>
            <button aria-label="关闭文档" disabled><svg class="ic12"><use href="#w-cls"/></svg></button>
        </div>
    </nav>

    <div class="row">
        <div class="bar">
            <i class="grip"></i>
            <button class="start"><svg class="ic"><use href="#globe"/></svg>启动<i class="tri"></i></button>
            <button class="tool" title="新建"><svg class="ic"><use href="#new"/></svg></button>
            <button class="tool" title="打开"><svg class="ic"><use href="#open"/></svg></button>
            <button class="tool" title="保存"><svg class="ic"><use href="#save"/></svg></button>
            <button class="tool" title="打印"><svg class="ic"><use href="#print"/></svg></button>
            <i class="sep"></i>
            <button class="tool" title="剪切"><svg class="ic"><use href="#cut"/></svg></button>
            <button class="tool" title="复制"><svg class="ic"><use href="#copy"/></svg></button>
            <button class="tool" title="粘贴"><svg class="ic"><use href="#paste"/></svg></button>
            <button class="tool" title="删除"><svg class="ic"><use href="#del"/></svg></button>
            <i class="sep"></i>
            <button class="tool" title="撤消"><svg class="ic"><use href="#undo"/></svg></button>
            <button class="drop" aria-label="撤消列表"></button>
            <i class="sep"></i>
            <button class="tool cnc">CNC</button>
            <button class="drop" aria-label="CNC 列表"></button>
            <i class="sep"></i>
            <button class="tool" title="信息"><svg class="ic"><use href="#info"/></svg></button>
            <i class="sep"></i>
            <div class="search">
                <input type="text" value="查找命令" aria-label="查找命令">
                <svg class="ic16"><use href="#mag"/></svg>
            </div>
            <button class="more" aria-label="更多"></button>
        </div>
        <div class="bar bar-gap">
            <i class="grip"></i>
            <button class="tool" title="图层设置"><svg class="ic"><use href="#layers"/></svg></button>
            <button class="tool" title="WCS"><svg class="ic"><use href="#wcs"/></svg></button>
            <button class="drop" aria-label="WCS 列表"></button>
            <i class="sep"></i>
            <button class="tool" title="显示和隐藏"><svg class="ic"><use href="#hand"/></svg></button>
            <button class="tool" title="编辑对象显示"><svg class="ic"><use href="#objpal"/></svg></button>
            <i class="sep"></i>
            <button class="tool" title="移动对象"><svg class="ic"><use href="#move"/></svg></button>
            <button class="drop" aria-label="移动列表"></button>
            <i class="sep"></i>
            <button class="tool" title="测量"><svg class="ic"><use href="#measline"/></svg></button>
            <button class="drop" aria-label="测量列表"></button>
            <button class="tool" title="测量距离"><svg class="ic"><use href="#ruler"/></svg></button>
            <button class="more" aria-label="更多"></button>
        </div>
        <div class="bar">
            <i class="grip"></i>
            <button class="tool" title="适合窗口"><svg class="ic"><use href="#fit"/></svg></button>
            <button class="drop" aria-label="窗口列表"></button>
            <button class="tool" title="定向视图"><svg class="ic"><use href="#orient"/></svg></button>
            <button class="drop" aria-label="视图列表"></button>
            <button class="tool" title="带边着色"><svg class="ic"><use href="#shaded"/></svg></button>
            <button class="drop" aria-label="着色列表"></button>
            <button class="tool" title="编辑截面"><svg class="ic"><use href="#clipo"/></svg></button>
            <button class="tool" title="剪切截面"><svg class="ic"><use href="#clipg"/></svg></button>
            <button class="drop" aria-label="截面列表"></button>
            <button class="tool" title="背景"><svg class="ic"><use href="#bg"/></svg></button>
            <button class="drop" aria-label="背景列表"></button>
            <i class="sep"></i>
            <button class="tool" title="显示"><svg class="ic"><use href="#exit"/></svg></button>
            <button class="tool" title="移动到图层"><svg class="ic"><use href="#exit2"/></svg></button>
            <button class="more" aria-label="更多"></button>
        </div>
    </div>

    <div class="row">
        <div class="bar">
            <i class="grip"></i>
            <button class="tool" title="创建程序"><svg class="ic"><use href="#m1"/></svg></button>
            <button class="tool" title="创建刀具"><svg class="ic"><use href="#m2"/></svg></button>
            <button class="tool" title="创建几何体"><svg class="ic"><use href="#m3"/></svg></button>
            <button class="tool" title="创建方法"><svg class="ic"><use href="#m4"/></svg></button>
            <button class="tool" title="创建工序"><svg class="ic"><use href="#m5"/></svg></button>
            <button class="more" aria-label="更多"></button>
        </div>
        <div class="bar">
            <i class="grip"></i>
            <button class="tool" title="编辑对象"><svg class="ic"><use href="#mw"/></svg></button>
            <button class="tool" title="剪切对象"><svg class="ic"><use href="#mc"/></svg></button>
            <button class="tool" title="复制对象"><svg class="ic"><use href="#mp"/></svg></button>
            <button class="tool" title="粘贴对象"><svg class="ic"><use href="#mp"/></svg></button>
            <button class="tool" title="剪贴板"><svg class="ic"><use href="#clip"/></svg></button>
            <button class="tool" title="删除对象"><svg class="ic"><use href="#mx"/></svg></button>
            <button class="tool" title="对象信息"><svg class="ic"><use href="#mi"/></svg></button>
            <button class="tool" title="显示对象"><svg class="ic"><use href="#mf"/></svg></button>
            <button class="more" aria-label="更多"></button>
        </div>
        <div class="bar">
            <i class="grip"></i>
            <button class="tool" title="生成刀轨"><svg class="ic"><use href="#gen"/></svg></button>
            <button class="tool" title="重播刀轨"><svg class="ic"><use href="#path"/></svg></button>
            <button class="tool" title="确认刀轨"><svg class="ic"><use href="#verify"/></svg></button>
            <button class="tool" title="列出刀轨"><svg class="ic"><use href="#pathp"/></svg></button>
            <button class="tool" title="机床仿真"><svg class="ic"><use href="#mach"/></svg></button>
            <button class="tool" title="同步"><svg class="ic"><use href="#docs"/></svg></button>
            <i class="sep"></i>
            <button class="tool" title="后处理"><svg class="ic"><use href="#mhand"/></svg></button>
            <button class="tool" title="车间文档"><svg class="ic"><use href="#shop"/></svg></button>
            <button class="tool" title="进给率"><svg class="ic"><use href="#mclock"/></svg></button>
            <button class="more" aria-label="更多"></button>
        </div>
        <div class="bar">
            <i class="grip"></i>
            <button class="tool" title="编辑刀轨"><svg class="ic"><use href="#pathm"/></svg></button>
            <button class="tool" title="刀轨"><svg class="ic"><use href="#path"/></svg></button>
            <button class="tool on" title="切削方向"><svg class="ic"><use href="#hat1"/></svg></button>
            <button class="tool on" title="切削步距"><svg class="ic"><use href="#hat2"/></svg></button>
            <button class="tool" title="点"><svg class="ic"><use href="#circ"/></svg></button>
            <button class="tool" title="曲线"><svg class="ic"><use href="#curve"/></svg></button>
            <button class="tool" title="边界颜色"><svg class="ic"><use href="#bpal"/></svg></button>
            <button class="tool" title="树颜色"><svg class="ic"><use href="#tpal"/></svg></button>
            <button class="tool" title="刀具颜色"><svg class="ic"><use href="#mpal"/></svg></button>
            <button class="tool" title="速度颜色"><svg class="ic"><use href="#rain"/></svg></button>
            <button class="more" aria-label="更多"></button>
        </div>
        <div class="bar">
            <i class="grip"></i>
            <button class="tool" title="车削截面"><svg class="ic"><use href="#fu1"/></svg></button>
            <button class="tool" title="部件"><svg class="ic"><use href="#fu2"/></svg></button>
            <button class="drop" aria-label="部件列表"></button>
            <button class="tool" title="毛坯"><svg class="ic"><use href="#fu3"/></svg></button>
            <button class="drop" aria-label="毛坯列表"></button>
            <button class="tool" title="主轴"><svg class="ic"><use href="#fu4"/></svg></button>
            <button class="drop" aria-label="主轴列表"></button>
            <button class="more" aria-label="更多"></button>
        </div>
        <div class="bar">
            <i class="grip"></i>
            <button class="tool cnc">CNC</button>
            <button class="more" aria-label="更多"></button>
        </div>
    </div>

    <div class="row">
        <div class="bar">
            <i class="grip"></i>
            <button class="tool" title="检查"><svg class="ic"><use href="#pok"/></svg></button>
            <button class="tool" title="刀具"><svg class="ic"><use href="#pbox"/></svg></button>
            <button class="tool" title="刀具树"><svg class="ic"><use href="#ptree"/></svg></button>
            <button class="tool" title="刀具表"><svg class="ic"><use href="#ptab"/></svg></button>
            <i class="sep"></i>
            <button class="tool" title="标记"><svg class="ic"><use href="#flag"/></svg></button>
            <i class="sep"></i>
            <button class="tool" title="窗口"><svg class="ic"><use href="#wins"/></svg></button>
            <button class="tool" title="文档"><svg class="ic"><use href="#mdoc"/></svg></button>
            <i class="sep"></i>
            <button class="tool" title="输出"><svg class="ic"><use href="#mp"/></svg></button>
            <button class="tool" title="编辑"><svg class="ic"><use href="#mw"/></svg></button>
            <button class="tool" title="时间"><svg class="ic"><use href="#mclock"/></svg></button>
            <button class="tool" title="机床"><svg class="ic"><use href="#paste"/></svg></button>
            <button class="more" aria-label="更多"></button>
        </div>
        <div class="bar">
            <i class="grip"></i>
            <button class="tool" title="波形"><svg class="ic"><use href="#wave"/></svg></button>
            <button class="tool" title="特征树"><svg class="ic"><use href="#ctree"/></svg></button>
            <i class="sep"></i>
            <button class="tool" title="查找特征"><svg class="ic"><use href="#cbin"/></svg></button>
            <button class="tool" title="示教点"><svg class="ic"><use href="#plus1"/></svg></button>
            <button class="tool" title="示教环"><svg class="ic"><use href="#loop1"/></svg></button>
            <button class="tool" title="示教柱"><svg class="ic"><use href="#cyl1"/></svg></button>
            <button class="tool" title="示教体"><svg class="ic"><use href="#cub1"/></svg></button>
            <i class="sep"></i>
            <button class="tool" title="特征工艺"><svg class="ic"><use href="#cmill"/></svg></button>
            <i class="sep"></i>
            <button class="tool" title="删除特征"><svg class="ic"><use href="#del"/></svg></button>
            <button class="more" aria-label="更多"></button>
        </div>
    </div>

    <div class="row row-select">
        <div class="combo combo-a"><select aria-label="类型过滤器"><option></option></select></div>
        <div class="combo combo-b"><select aria-label="选择范围"><option>仅在工作部件内</option></select></div>
        <button class="mini" title="选择"><svg class="ic20"><use href="#selstar"/></svg></button>
        <i class="sep"></i>
        <button class="mini" title="过滤器"><svg class="ic20"><use href="#lock"/></svg></button>
        <button class="mini" title="常规选择过滤器"><svg class="ic20"><use href="#selflt"/></svg></button>
        <button class="drop" aria-label="过滤器列表"></button>
        <button class="mini" title="捕捉"><svg class="ic20"><use href="#snap"/></svg></button>
        <button class="mini" title="捕捉面"><svg class="ic20"><use href="#snap2"/></svg></button>
        <i class="sep"></i>
        <button class="mini dark" title="多边形"><svg class="ic20"><use href="#hex"/></svg></button>
        <button class="mini dark" title="矩形"><svg class="ic20"><use href="#dash"/></svg></button>
        <button class="drop" aria-label="选择方式列表"></button>
        <i class="sep"></i>
        <button class="mini" title="面"><svg class="ic20"><use href="#prism"/></svg></button>
        <button class="mini" title="体"><svg class="ic20"><use href="#face"/></svg></button>
        <button class="more last" aria-label="更多"></button>
    </div>

    <main class="work">
        <aside class="rail">
            <button class="rail-gear" aria-label="资源条选项"><svg class="ic14"><use href="#gear"/></svg></button>
            <button title="装配导航器"><svg class="ic"><use href="#r1"/></svg></button>
            <button title="约束导航器"><svg class="ic"><use href="#r2"/></svg></button>
            <button title="部件导航器"><svg class="ic"><use href="#r3"/></svg></button>
            <button title="工序导航器" class="on"><svg class="ic"><use href="#r4"/></svg></button>
            <button title="加工特征导航器"><svg class="ic"><use href="#r5"/></svg></button>
            <button title="机床导航器"><svg class="ic"><use href="#r6"/></svg></button>
            <button title="重用库"><svg class="ic"><use href="#r7"/></svg></button>
            <button title="HD3D 工具" class="tall"><svg class="ic"><use href="#r8"/></svg></button>
            <button title="Web 浏览器" class="tall"><svg class="ic"><use href="#r9"/></svg></button>
            <button title="历史记录" class="tall"><svg class="ic"><use href="#r10"/></svg></button>
            <button title="Process Studio"><svg class="ic"><use href="#r11"/></svg></button>
            <button title="加工向导"><svg class="ic"><use href="#r12"/></svg></button>
            <button title="角色"><svg class="ic"><use href="#r13"/></svg></button>
            <button title="系统场景"><svg class="ic"><use href="#r14"/></svg></button>
            <button title="系统材料"><svg class="ic"><use href="#r15"/></svg></button>
        </aside>

        <section class="navigator">
            <h2>工序导航器 - 几何</h2>
            <div class="nav-list">
                <div class="nav-head"></div>
                <div class="hscroll">
                    <button aria-label="向左"><svg class="ic12"><use href="#left"/></svg></button>
                    <div class="thumb"></div>
                    <button aria-label="向右"><svg class="ic12"><use href="#right"/></svg></button>
                </div>
            </div>
            <div class="splitter"></div>
            <button class="fold">相依性<svg class="ic12"><use href="#down"/></svg></button>
            <button class="fold">细节<svg class="ic12"><use href="#down"/></svg></button>
        </section>

        <section class="graphics">
            <svg class="scene" viewBox="317 188 1603 762" preserveAspectRatio="xMidYMid slice" role="img" aria-label="部件和刀轨">
                <!-- block with its pocket -->
                <svg x="780" y="340" width="660" height="390" viewBox="0 0 1568 1170" preserveAspectRatio="none">
                    <g stroke="#26342c" stroke-width="2">
                        <path d="M37 375L700 756V1118L37 737z" fill="#5a7868"/>
                        <path d="M1512 448L700 756V1118L1512 805z" fill="#68907d"/>
                        <path d="M37 375L850 62L1512 448L700 756z" fill="#f48a45"/>
                        <path d="M125 385Q125 364 160 352L555 203Q600 186 650 212L690 238Q770 268 850 260L930 243Q1000 220 1045 250L1370 432Q1390 455 1375 478L1215 545L700 740L300 500L150 408Q125 398 125 385z" fill="#514fa2"/>
                        <path d="M150 360v48M555 203v35M648 212v38M690 238v36M936 243v34M943 240v36M1036 246v38M775 262v22"/>
                    </g>
                    <path d="M155 408L195 393Q222 412 217 440z" fill="#f48a45"/>
                    <path d="M192 380L597 227L640 247Q690 275 760 287Q850 298 985 263L1345 462L1345 478L1215 542V580L1262 588V632L1200 622L1190 657L1130 640L1060 705L940 712L812 765L752 785V880L722 906L585 866L605 760L500 700L380 640L300 570L180 557V520L262 500V462L215 430Q215 400 192 395z" fill="#14ffff"/>
                    <path d="M270 420L315 403L328 425L300 440zM968 470L985 455L1015 468L1022 485L985 484zM518 418L532 415L540 430zM1040 515L1060 500L1078 510L1055 528zM1085 540L1120 528L1140 545L1110 562z" fill="#514fa2"/>
                    <path d="M1070 492L1090 455L1125 474L1090 500zM1178 495L1200 460L1235 478L1205 500zM1288 490L1310 458L1345 470L1330 500L1230 535L1212 540zM1060 545L1095 535L1120 560L1090 570zM370 495L395 480L420 500L380 512zM215 480L262 465L300 485L240 492z" fill="#f48a45"/>
                    <path d="M1215 540L1240 556V582L1215 580z" fill="#514fa2"/>
                    <path d="M640 842L730 868M640 848L725 872M665 892L705 902" stroke="#c8b890" stroke-width="2"/>

                    <!-- blanks left of the part -->
                    <path d="M35 478L200 514" stroke="#f6d6e4" stroke-width="8"/>
                    <path d="M50 490L85 512L150 510L178 530V558L222 562L225 545L265 575L300 590L312 565L330 600L355 632L385 630V655L430 660L500 692L545 705L560 770L607 760V860L533 878L530 845L472 860L430 808H382L380 770L330 778L312 754L268 756L240 735L218 710V683L152 688V618L110 600L52 630z" fill="#f8d8e8"/>
                    <path d="M270 575L300 560L335 585L325 605zM340 610L385 625L380 650zM470 690L500 700L490 720zM510 730L530 700L560 720V750z" fill="#14ffff"/>
                    <path d="M982 860L1005 832L1028 822L1020 860z" fill="#f8d8e8"/>

                    <!-- blanks right of the part -->
                    <path d="M1285 580L1490 553V530" fill="none" stroke="#e6c21c" stroke-width="7"/>
                    <path d="M1285 582L1370 572L1405 605V712L1360 688L1287 705L1283 759L1205 745L1200 790L1137 776L1130 803L1108 795L1080 824L1020 825L985 864L920 855L893 896L840 890L818 926L722 906L750 880V783L812 803L840 770L875 780L890 740L940 712L975 722L1010 705L1062 715L1060 690L1130 650L1190 660L1200 622L1285 632z" fill="#f6ca06"/>
                    <path d="M402 810H428V835H402z" fill="#f6ca06"/>
                    <path d="M935 690L975 690V725L940 712zM1015 680L1062 690V715L1015 705zM875 770L890 740V780z" fill="#14ffff"/>

                    <!-- rapid moves -->
                    <g stroke="#0a0ac8" fill="none">
                        <path d="M62 438V506" stroke-width="22" stroke-dasharray="20 24"/>
                        <path d="M161 490V560" stroke-width="22" stroke-dasharray="22 22"/>
                        <path d="M153 590v22M218 570v60M229 530v40M300 610v30M330 690v26M382 690v60M372 660v10" stroke-width="7" stroke-dasharray="16 8"/>
                        <path d="M238 590L268 600M238 608L266 620M238 650L280 662M238 695L272 712M250 710L275 722" stroke-width="16"/>
                        <path d="M280 645V676M283 600V630" stroke-width="10"/>
                        <path d="M240 540L285 580M345 585L328 610M334 635L330 668M400 620L385 640" stroke-width="16"/>
                        <path d="M415 640V808" stroke-width="26" stroke-dasharray="40 12 24 10"/>
                        <path d="M432 660L472 690M432 700L472 725M430 758L472 778M430 800L470 828" stroke-width="18" stroke-dasharray="16 3"/>
                        <path d="M485 680V800" stroke-width="9" stroke-dasharray="44 14"/>
                        <path d="M540 705L530 740M540 755L532 790M534 810v22" stroke-width="9"/>
                        <path d="M815 738V895" stroke-width="10" stroke-dasharray="60 8 30 8"/>
                        <path d="M818 768L840 750M818 808L840 788M818 850L840 830M820 888L838 868" stroke-width="20"/>
                        <path d="M875 712V850" stroke-width="6" stroke-dasharray="70 6 20 6"/>
                        <path d="M890 732L915 710M892 772L915 748M892 815L915 790M892 854L915 832" stroke-width="18"/>
                        <path d="M938 684V826" stroke-width="6"/>
                        <path d="M1000 668V770" stroke-width="26" stroke-dasharray="34 6 22 8"/>
                        <path d="M984 680L990 832M1010 690L1012 832" stroke-width="13" stroke-dasharray="44 10"/>
                        <path d="M1065 645V770" stroke-width="7" stroke-dasharray="50 8"/>
                        <path d="M1076 672L1112 640M1076 710L1112 682M1076 750L1112 722M1076 790L1112 764" stroke-width="18"/>
                        <path d="M1125 622L1130 780M1195 590L1202 770M1270 560L1281 740" stroke-width="9" stroke-dasharray="110 5 14 5"/>
                    </g>
                    <path d="M1264 565L1282 560V660L1268 615zM1384 520L1404 518V606L1394 590zM1118 625L1132 620V700zM1188 595L1202 592V660z" fill="#0a0ac8"/>
                    <path d="M1490 480V530" stroke="#0a0ac8" stroke-width="6" stroke-dasharray="14 18"/>
                    <path d="M630 490v30M632 590v10" stroke="#0a0ac8" stroke-width="10"/>

                    <!-- cutting moves -->
                    <g stroke="#e80404" fill="none">
                        <path d="M37 405L60 412M68 425L270 466M290 478L800 479L1492 470" stroke-width="8" stroke-dasharray="20 16"/>
                        <path d="M260 485L600 494L1400 516" stroke-width="12" stroke-dasharray="30 6 18 7"/>
                        <path d="M360 508L900 512L1260 520" stroke-width="8" stroke-dasharray="16 20"/>
                        <path d="M290 538L700 541L1120 556" stroke-width="18" stroke-dasharray="25 13"/>
                        <path d="M300 558L700 558L1110 572" stroke-width="22" stroke-dasharray="18 20"/>
                        <path d="M650 522L860 530" stroke-width="12" stroke-dasharray="14 22"/>
                        <path d="M400 575L700 574L1200 590" stroke-width="14" stroke-dasharray="22 16"/>
                        <path d="M1060 550L1282 556" stroke-width="18" stroke-dasharray="28 10"/>
                        <path d="M345 591L500 598L1125 614" stroke-width="20" stroke-dasharray="22 17"/>
                        <path d="M385 622L700 625L1125 626" stroke-width="12" stroke-dasharray="26 7"/>
                        <path d="M440 628L800 634L1110 630" stroke-width="10" stroke-dasharray="32 4"/>
                        <path d="M430 650L700 655L1010 664" stroke-width="18" stroke-dasharray="24 14"/>
                        <path d="M460 664L700 672L1000 676" stroke-width="16" stroke-dasharray="18 18"/>
                        <path d="M490 684L700 690L920 684" stroke-width="18" stroke-dasharray="30 8"/>
                        <path d="M550 708L720 706L910 706" stroke-width="20" stroke-dasharray="20 18"/>
                        <path d="M55 436L130 456L200 482L260 500" stroke-width="14" stroke-dasharray="30 4"/>
                        <path d="M240 492L330 534L430 575" stroke-width="24"/>
                        <path d="M420 572L480 602L590 634L700 672L810 722" stroke-width="20" stroke-dasharray="46 3"/>
                        <path d="M75 446L200 496L300 530L400 560L480 606L600 650L740 700L830 734" stroke-width="16" stroke-dasharray="34 5"/>
                        <path d="M110 440L240 478L350 545L450 580L520 590" stroke-width="12" stroke-dasharray="24 6"/>
                    </g>

                    <!-- machine axes -->
                    <path d="M775 411V180" stroke="#2838c0" stroke-width="4"/>
                    <path d="M775 125L784 182H766z" fill="#1828a8"/>
                    <path d="M775 190L783 226H767zM775 305L783 342H767z" fill="#7a5048"/>
                    <path d="M775 411L925 352" stroke="#188838" stroke-width="4"/>
                    <path d="M966 340L925 340L932 358z" fill="#189830"/>
                    <path d="M850 384L818 382L824 400zM918 356L894 354L900 370z" fill="#a06858"/>
                    <path d="M775 411L895 478" stroke="#806058" stroke-width="4"/>
                    <path d="M835 445L806 436L818 425zM888 478L868 472L876 462zM924 498L893 492L906 476z" fill="#b06050"/>
                    <path d="M778 292L852 265V382L914 418L838 446V332L778 298M838 446L778 411" fill="none" stroke="#806a60" stroke-width="2"/>
                </svg>
                <g class="axis-text">
                    <text x="1110" y="379" fill="#6a35d8">ZM</text>
                    <text x="1167" y="448" fill="#2a8a5a">YM</text>
                    <text x="1154" y="519" fill="#c05050">XM</text>
                    <text x="1111" y="432" fill="#a06858">Z</text>
                    <text x="1132" y="461" fill="#607868">Y</text>
                    <text x="1128" y="501" fill="#b08880">X</text>
                </g>

                <!-- view triad -->
                <path d="M380 863l17-6 16 8v23l-18 4-15-6z" fill="#cfd3d1" stroke="#a2a6a4"/>
                <path d="M380 863l16 7 17-5M396 870v22M397 857v27l-17 4M397 884l16 4" fill="none" stroke="#b0b4b2"/>
                <path d="M380 886l25-7" stroke="#9cc8a0" stroke-width="2"/>
                <path d="M411 877l-10-1 3 5z" fill="#80b888"/>
                <path d="M378 886V857" stroke="#1838a0" stroke-width="3"/>
                <path d="M378 848l3 10h-6z" fill="#1028a8"/>
                <path d="M379 887l18 8" stroke="#b83028" stroke-width="3"/>
                <path d="M405 898l-10 0 4-6z" fill="#b02820"/>
                <circle cx="378" cy="887" r="4" fill="#d8d8d8" stroke="#888"/>
                <g class="triad-text">
                    <text x="374" y="848" fill="#3a50d0">Z</text>
                    <text x="412" y="880" fill="#38985a">Y</text>
                    <text x="404" y="904" fill="#c04848">X</text>
                </g>

                <!-- busy cursor -->
                <circle cx="995" cy="770" r="7" fill="#d8ecf8" stroke="#3c94da" stroke-width="5"/>
                <path d="M988 772a7 7 0 0 1 4-8" fill="none" stroke="#48c0ee" stroke-width="4"/>
            </svg>
        </section>

        <form class="dialog" role="dialog" aria-label="设置加工操作">
            <div class="dialog-title">
                <svg class="ic16"><use href="#gear"/></svg>
                <span>设置加工操作</span>
                <button type="button" aria-label="重置"><svg class="ic12"><use href="#reset"/></svg></button>
                <button type="button" aria-label="关闭"><svg class="ic12"><use href="#w-cls"/></svg></button>
            </div>
            <div class="dialog-body">
                <h3>设置加工操作<svg class="ic12"><use href="#up"/></svg></h3>
                <div class="group">
                    <div class="grid-wrap">
                        <table class="ops">
                            <colgroup><col class="c40"><col class="c90"><col class="c60"><col class="c60"><col class="c60"><col class="c90"><col class="c90"><col></colgroup>
                            <thead>
                                <tr><th>选择</th><th>加工操作</th><th>加工类型</th><th>切削区域</th><th>修剪边界</th><th>切削区域颜色</th><th>修剪边界颜色</th><th></th></tr>
                            </thead>
                            <tbody>
                                <tr><td><span class="branch"></span><input type="checkbox" id="op1" checked></td><td><label for="op1">粗加工</label></td><td>1</td><td>0</td><td>1</td><td>1</td><td>75</td><td></td></tr>
                                <tr><td><span class="branch"></span><input type="checkbox" id="op2" checked></td><td><label for="op2">二次开粗</label></td><td>1</td><td>0</td><td>1</td><td>1</td><td>75</td><td></td></tr>
                                <tr><td><span class="branch"></span><input type="checkbox" id="op3" checked></td><td><label for="op3">垂直面</label></td><td>2</td><td>1</td><td>1</td><td>128</td><td>75</td><td></td></tr>
                                <tr><td><span class="branch"></span><input type="checkbox" id="op4" checked></td><td><label for="op4">斜面</label></td><td>2</td><td>1</td><td>1</td><td>100</td><td>75</td><td></td></tr>
                                <tr><td><span class="branch"></span><input type="checkbox" id="op5" checked></td><td><label for="op5">平坦面</label></td><td>2</td><td>1</td><td>1</td><td>90</td><td>75</td><td></td></tr>
                                <tr><td><span class="branch"></span><input type="checkbox" id="op6" checked></td><td><label for="op6">平面</label></td><td>2</td><td>1</td><td>1</td><td>120</td><td>75</td><td></td></tr>
                                <tr><td><span class="branch"></span><input type="checkbox" id="op7"></td><td><label for="op7">钻中心孔</label></td><td>3</td><td>0</td><td>0</td><td>0</td><td>0</td><td></td></tr>
                                <tr><td><span class="branch"></span><input type="checkbox" id="op8"></td><td><label for="op8">钻孔</label></td><td>4</td><td>0</td><td>0</td><td>0</td><td>0</td><td></td></tr>
                                <tr><td></td><td></td><td></td><td></td><td></td><td></td><td></td><td></td></tr>
                                <tr><td></td><td></td><td></td><td></td><td></td><td></td><td></td><td></td></tr>
                                <tr><td></td><td></td><td></td><td></td><td></td><td></td><td></td><td></td></tr>
                                <tr><td></td><td></td><td></td><td></td><td></td><td></td><td></td><td></td></tr>
                                <tr><td></td><td></td><td></td><td></td><td></td><td></td><td></td><td></td></tr>
                                <tr class="short"><td></td><td></td><td></td><td></td><td></td><td></td><td></td><td></td></tr>
                            </tbody>
                        </table>
                    </div>
                    <div class="params">
                        <h4>其他参数<svg class="ic12"><use href="#up"/></svg></h4>
                        <div class="checks">
                            <label><input type="checkbox" checked>全选</label>
                            <label><input type="checkbox">半精加工</label>
                        </div>
                    </div>
                </div>
            </div>
            <div class="dialog-buttons">
                <button type="button" class="primary">确定</button>
                <button type="button">应用</button>
                <button type="button">取消</button>
            </div>
        </form>
    </main>

    <div class="row">
        <div class="bar">
            <i class="grip"></i>
            <button class="tool" title="程序顺序视图"><svg class="ic"><use href="#b1"/></svg></button>
            <button class="tool" title="机床视图"><svg class="ic"><use href="#b2"/></svg></button>
            <button class="tool" title="几何视图"><svg class="ic"><use href="#ctree"/></svg></button>
            <button class="tool" title="加工方法视图"><svg class="ic"><use href="#b4"/></svg></button>
            <button class="more" aria-label="更多"></button>
        </div>
        <div class="bar">
            <i class="grip"></i>
            <button class="tool" title="曲面分析"><svg class="ic"><use href="#rsurf"/></svg></button>
            <button class="drop" aria-label="分析列表"></button>
            <button class="tool" title="链接"><svg class="ic"><use href="#chain"/></svg></button>
            <button class="tool" title="点"><svg class="ic"><use href="#plus"/></svg></button>
            <button class="drop" aria-label="点列表"></button>
            <button class="tool" title="拉伸"><svg class="ic"><use href="#lift"/></svg></button>
            <button class="drop" aria-label="拉伸列表"></button>
            <button class="tool" title="孔"><svg class="ic"><use href="#cyl"/></svg></button>
            <button class="tool" title="抽取"><svg class="ic"><use href="#sheet"/></svg></button>
            <button class="tool" title="包容块"><svg class="ic"><use href="#wire"/></svg></button>
            <button class="drop" aria-label="包容块列表"></button>
            <button class="more" aria-label="更多"></button>
        </div>
    </div>
    <div class="row row-last">
        <div class="bar">
            <i class="grip"></i>
            <button class="tool" title="查找组件"><svg class="ic"><use href="#c1"/></svg></button>
            <button class="drop" aria-label="组件列表"></button>
            <button class="tool" title="打开组件"><svg class="ic"><use href="#c2"/></svg></button>
            <button class="tool" title="产品轮廓"><svg class="ic"><use href="#c3"/></svg></button>
            <button class="tool" title="添加组件"><svg class="ic"><use href="#c4"/></svg></button>
            <button class="drop" aria-label="添加列表"></button>
            <button class="tool" title="移动组件"><svg class="ic"><use href="#c5"/></svg></button>
            <button class="tool" title="镜像装配"><svg class="ic"><use href="#c6"/></svg></button>
            <button class="tool" title="装配约束"><svg class="ic"><use href="#c7"/></svg></button>
            <i class="sep"></i>
            <button class="tool" title="爆炸图"><svg class="ic"><use href="#c8"/></svg></button>
            <button class="tool" title="阵列组件"><svg class="ic"><use href="#c9"/></svg></button>
            <button class="tool" title="装配序列"><svg class="ic"><use href="#c10"/></svg></button>
            <i class="sep"></i>
            <button class="tool" title="替换组件"><svg class="ic"><use href="#c11"/></svg></button>
            <i class="sep"></i>
            <button class="tool" title="部件间链接"><svg class="ic"><use href="#chain"/></svg></button>
            <button class="tool" title="WAVE"><svg class="ic"><use href="#c12"/></svg></button>
            <button class="tool" title="关系浏览器"><svg class="ic"><use href="#c13"/></svg></button>
            <i class="sep"></i>
            <button class="tool" title="装配间隙"><svg class="ic"><use href="#c14"/></svg></button>
            <button class="drop" aria-label="间隙列表"></button>
            <button class="more" aria-label="更多"></button>
        </div>
    </div>

    <div class="status">
        <span class="status-text">计算刀路 3</span>
        <span class="status-icons"><svg class="ic16"><use href="#frame"/></svg><svg class="ic16"><use href="#globe"/></svg></span>
    </div>

    <footer class="taskbar">
        <button class="task-icon" aria-label="开始"><svg class="ic16"><use href="#t-win"/></svg></button>
        <button class="task-icon" aria-label="搜索"><svg class="ic16"><use href="#mag"/></svg></button>
        <button class="task"><svg class="ic20"><use href="#t-dir"/></svg>CMNXCam</button>
        <button class="task"><svg class="ic20"><use href="#t-dir"/></svg>ocam录屏软件</button>
        <button class="task on"><svg class="ic24"><use href="#globe"/></svg>NX 10 - 加工 - [1...</button>
        <button class="task"><svg class="ic20"><use href="#t-cam"/></svg>ocam</button>
        <div class="tray">
            <svg class="ic16"><use href="#t-up"/></svg>
            <svg class="ic16"><use href="#t-bat"/></svg>
            <svg class="ic16"><use href="#t-net"/></svg>
            <svg class="ic16"><use href="#t-vol"/></svg>
            <span class="ime">英</span>
            <time class="clock">16:35<br>2025/8/4</time>
            <button class="msg" aria-label="通知"><svg class="ic18"><use href="#t-msg"/></svg></button>
        </div>
    </footer>
</body>
</html>
```
FILE: styles.css
```
* {
    box-sizing: border-box;
}
body {
    margin: 0;
    height: 100vh;
    display: flex;
    flex-direction: column;
    overflow: hidden;
    background-color: #fdfffd;
    color: #222;
    font-family: "Open Sans", "Noto Sans CJK SC", sans-serif;
    font-size: 12px;
    line-height: 16px;
}
h1, h2, h3, h4 {
    margin: 0;
    font-weight: normal;
}
button {
    margin: 0;
    padding: 0;
    border: none;
    background: none;
    color: inherit;
    font: inherit;
    display: flex;
    align-items: center;
    justify-content: center;
    flex-shrink: 0;
}
input, select {
    font: inherit;
    margin: 0;
}
.sprite {
    position: absolute;
    width: 0;
    height: 0;
}

/* icons */
.ic, .ic12, .ic14, .ic16, .ic18, .ic20, .ic24 {
    stroke: currentColor;
    fill: none;
    flex-shrink: 0;
}
.ic, .ic24 {
    width: 24px;
    height: 24px;
}
.ic12 {
    width: 12px;
    height: 12px;
}
.ic14 {
    width: 14px;
    height: 14px;
}
.ic16 {
    width: 16px;
    height: 16px;
}
.ic18 {
    width: 18px;
    height: 18px;
}
.ic20 {
    width: 20px;
    height: 20px;
}

/* title and menu */
.titlebar {
    height: 26px;
    display: flex;
    align-items: center;
    padding-left: 4px;
    flex-shrink: 0;
}
.nx-logo {
    width: 38px;
    color: #8b9fab;
    font-size: 22px;
    line-height: 26px;
    font-weight: bold;
    border-right: 1px solid #dde3e3;
}
.titlebar h1 {
    flex: 1;
    padding-left: 5px;
    font-size: 13px;
    color: #111;
}
.siemens {
    color: #0d8a85;
    font-weight: bold;
    font-size: 14px;
}
.win-buttons {
    display: flex;
    gap: 12px;
    padding: 0 7px 0 27px;
    color: #444;
}
.menubar {
    height: 27px;
    display: flex;
    align-items: center;
    gap: 12px;
    padding: 0 0 2px 8px;
    background-color: #c4d7d2;
    flex-shrink: 0;
}
.menubar a {
    color: #222;
    text-decoration: none;
    white-space: nowrap;
}
.menubar a.wide {
    margin-right: 3px;
}
.menu-icon {
    margin-right: -7px;
}
.doc-buttons {
    margin-left: auto;
    padding-right: 7px;
    display: flex;
    gap: 6px;
}
.doc-buttons button:disabled {
    color: #a3b1ae;
}

/* toolbars */
.row {
    height: 34px;
    display: flex;
    flex-shrink: 0;
}
.bar {
    display: flex;
    align-items: center;
    border-right: 1px solid #dde2e0;
    border-bottom: 1px solid #dde2e0;
}
.bar-gap {
    margin-left: 74px;
}
.grip {
    width: 2px;
    height: 26px;
    margin: 0 3px 0 3px;
    background-image: repeating-linear-gradient(#a9aeac 0 2px, transparent 2px 4px);
    flex-shrink: 0;
}
.sep {
    width: 1px;
    height: 26px;
    margin: 0 3px 0 2px;
    background-color: #d3d8d6;
    flex-shrink: 0;
}
.tool {
    width: 31px;
    height: 30px;
    color: #a6a6a6;
}
.tool.on {
    background-color: #c0d6d0;
    border: 1px solid #a9c0ba;
}
.tool.cnc {
    font-size: 11px;
}
.start {
    width: 65px;
    gap: 3px;
    color: #222;
}
.tri, .drop::after, .more::after, .combo::after {
    content: "";
    border: 3px solid transparent;
    border-top: 4px solid #111;
    border-bottom: none;
}
.drop {
    width: 12px;
    height: 30px;
}
.more {
    width: 13px;
    height: 30px;
    padding: 14px 2px 0 0;
}
.more.last {
    margin-left: auto;
    margin-right: 1px;
    padding-top: 10px;
}
.search {
    width: 125px;
    height: 20px;
    margin: 0 4px;
    display: flex;
    align-items: center;
    border: 1px solid #8c9290;
    color: #444;
    background-color: #fff;
}
.search input {
    width: 106px;
    height: 18px;
    border: none;
    padding: 0 1px;
    background: none;
    color: #333;
}
.row-select {
    height: 31px;
    align-items: center;
    padding-left: 5px;
}
.combo {
    display: flex;
    align-items: center;
    height: 20px;
    padding-right: 5px;
    border: 1px solid #b4b8b6;
    margin-right: 7px;
}
.combo::after {
    border-top-color: #999;
    border-width: 4px 4px 0;
}
.combo-a {
    width: 133px;
}
.combo-b {
    width: 139px;
    margin-right: 5px;
}
.combo select {
    flex: 1;
    min-width: 0;
    height: 18px;
    padding: 0 2px;
    appearance: none;
    border: none;
    background: none;
    color: #9a9a9a;
}
.mini {
    width: 22px;
    height: 26px;
    color: #a6a6a6;
}
.mini.dark {
    width: 24px;
    color: #777;
}
.row-last {
    height: 35px;
    border-bottom: 1px solid #b2b6b4;
}

/* work area */
.work {
    position: relative;
    flex: 1;
    min-height: 0;
    display: flex;
    border-top: 2px solid #8f9a97;
}
.rail {
    width: 32px;
    padding-left: 2px;
    background-color: #dadedb;
    border-right: 1px solid #a0a5a3;
    flex-shrink: 0;
}
.rail button {
    width: 30px;
    height: 42px;
    padding-left: 2px;
}
.rail .rail-gear {
    height: 41px;
    padding: 0 4px 16px 0;
}
.rail .tall {
    height: 54px;
    padding-top: 12px;
}
.rail .on {
    background-color: #fdfffd;
    border: 1px solid #a0a5a3;
    border-right: none;
}
.navigator {
    width: 285px;
    padding: 0 9px 5px 6px;
    display: flex;
    flex-direction: column;
    border-right: 1px solid #8c9492;
    flex-shrink: 0;
}
.navigator h2 {
    height: 28px;
    line-height: 28px;
    padding-left: 4px;
    font-size: 12px;
}
.nav-list {
    flex: 1;
    display: flex;
    flex-direction: column;
    border: 1px solid #d5d9d7;
}
.nav-head {
    height: 21px;
    background-color: #eff1f0;
    border-bottom: 1px solid #dadddb;
}
.hscroll {
    height: 16px;
    margin-top: auto;
    display: flex;
    background-color: #f0f1f0;
    color: #555;
}
.hscroll button {
    width: 18px;
}
.hscroll button:last-child {
    margin-left: auto;
}
.thumb {
    width: 82px;
    background-color: #cbcccb;
}
.splitter {
    height: 5px;
    margin: 1px 0 2px;
    background-color: #d6dad8;
    border: 1px solid #b9bdbb;
}
.fold {
    height: 24px;
    justify-content: space-between;
    padding: 0 5px 0 7px;
    color: #3a86a8;
    font-size: 14px;
    border-bottom: 2px solid #d0d4d2;
}
.graphics {
    flex: 1;
    min-width: 0;
    background: linear-gradient(#b1b3b2, #c5cac7 24%, #dbe1de 58%, #e2e8e5 75%);
}
.scene {
    display: block;
    width: 100%;
    height: 100%;
}
.axis-text {
    font-size: 13px;
}
.triad-text {
    font-size: 11px;
}

/* operation dialog */
.dialog {
    position: absolute;
    left: 255px;
    top: -2px;
    width: 538px;
    background-color: #e6e8e6;
    border: 1px solid #c2c6c4;
    border-top: none;
}
.dialog-title {
    height: 24px;
    display: flex;
    align-items: center;
    gap: 8px;
    padding: 0 9px 0 7px;
    margin: 0 -1px;
    background-color: #5a877f;
    color: #fff;
    font-size: 13px;
}
.dialog-title span {
    flex: 1;
}
.dialog-body {
    margin: 4px 5px 0;
    padding: 0 9px 7px 7px;
    background-color: #fdfffd;
    border-bottom: 1px solid #c2c6c4;
}
.dialog h3, .dialog h4 {
    display: flex;
    align-items: center;
    justify-content: space-between;
    color: #3f89b0;
}
.dialog h3 {
    height: 30px;
    padding-bottom: 4px;
    font-size: 14px;
    margin-right: -3px;
}
.group {
    padding: 3px 4px 5px 3px;
    border: 1px solid #d4dad7;
}
.grid-wrap {
    padding: 1px;
    border: 1px solid #d4dad7;
}
.ops {
    width: 100%;
    table-layout: fixed;
    border-collapse: collapse;
}
.c40 { width: 40px; }
.c60 { width: 60px; }
.c90 { width: 90px; }
.ops th, .ops td {
    height: 20px;
    padding: 0 0 0 5px;
    text-align: left;
    font-weight: normal;
    white-space: nowrap;
    line-height: 16px;
    border-right: 1px solid #e3e8e6;
    border-bottom: 1px solid #e3e8e6;
}
.ops th {
    padding-left: 6px;
    background-color: #eff1f0;
    border-color: #d2d6d4;
}
.ops tr:nth-child(even) td {
    background-color: #f7faf8;
}
.ops .short td {
    height: 12px;
    border-bottom: none;
}
.ops td:first-child {
    padding: 0 0 0 9px;
    font-size: 0;
    line-height: 0;
}
.ops th:last-child, .ops td:last-child {
    padding: 0;
    border-right: none;
}
.branch {
    display: inline-flex;
    align-items: center;
    width: 9px;
    height: 19px;
    margin-right: 3px;
    border-left: 1px dotted #999;
    vertical-align: middle;
}
.branch::after {
    content: "";
    flex: 1;
    border-top: 1px dotted #999;
}
.dialog input {
    appearance: none;
    width: 12px;
    height: 12px;
    border: 1px solid #111;
    background-color: #fff;
    vertical-align: middle;
}
.ops input:checked::before {
    content: "";
    display: block;
    width: 10px;
    height: 10px;
    background-color: #c02828;
    clip-path: polygon(0 40%, 20% 25%, 42% 45%, 90% 0, 100% 20%, 42% 100%);
}
.params {
    margin-top: 3px;
    padding: 3px 5px 11px 7px;
    background-color: #eef3f2;
    border: 1px solid #d4dad7;
}
.dialog h4 {
    font-size: 12px;
    height: 16px;
}
.checks {
    display: flex;
    justify-content: space-between;
    padding: 12px 5px 0 0;
}
.checks label {
    display: flex;
    align-items: center;
    gap: 5px;
}
.checks input {
    width: 13px;
    height: 13px;
}
.checks input:checked::before {
    content: "";
    display: block;
    width: 4px;
    height: 8px;
    margin: 0 0 0 4px;
    border: solid #333;
    border-width: 0 1px 1px 0;
    transform: rotate(40deg);
}
.dialog-buttons {
    display: flex;
    justify-content: flex-end;
    gap: 5px;
    padding: 11px 15px 10px 0;
}
.dialog-buttons button {
    width: 54px;
    height: 25px;
    background-color: #c5c9c8;
    border: 1px solid #a9adac;
}
.dialog-buttons .primary {
    background-color: #9dcce0;
    border: 1px solid #4a94b4;
    outline: 1px dotted #567;
    outline-offset: -4px;
}

/* status and taskbar */
.status {
    height: 21px;
    display: grid;
    grid-template-columns: 1fr auto 1fr;
    align-items: center;
    padding: 0 28px 2px 0;
    flex-shrink: 0;
}
.status-text {
    grid-column: 2;
    font-weight: bold;
}
.status-icons {
    display: flex;
    justify-content: flex-end;
    gap: 12px;
}
.taskbar {
    height: 40px;
    display: flex;
    color: #fff;
    background: linear-gradient(90deg, #22383f, #1d333b 50%, #1a283f 85%);
    flex-shrink: 0;
}
.task-icon {
    width: 48px;
}
.task-icon:nth-child(2) {
    width: 52px;
}
.task {
    width: 160px;
    padding-left: 10px;
    gap: 7px;
    justify-content: flex-start;
    font-size: 13px;
    background: linear-gradient(#7fb6de, #7fb6de) no-repeat 4px 100% / 152px 2px;
}
.task.on {
    gap: 4px;
    background: linear-gradient(#7fb6de, #7fb6de) no-repeat 0 100% / 160px 2px #4c5f66;
}
.tray {
    margin-left: auto;
    display: flex;
    align-items: center;
    gap: 8px;
}
.ime {
    font-size: 14px;
}
.clock {
    padding-left: 4px;
    text-align: center;
    line-height: 19px;
}
.msg {
    width: 60px;
    height: 40px;
    border-right: 1px solid #56626f;
    margin: 0 3px 0 -8px;
}
```
